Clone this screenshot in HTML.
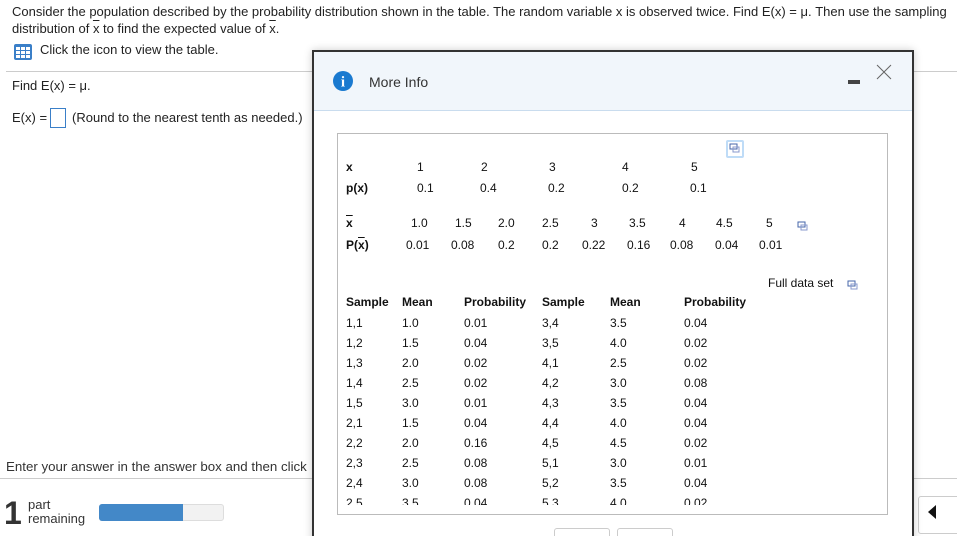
<!DOCTYPE html>
<html style="overflow:hidden"><head><style>
html,body{overflow:hidden}
body{margin:0;width:957px;height:536px;background:#fff;font-family:"Liberation Sans",sans-serif;color:#222;position:relative}
.a{position:absolute;white-space:nowrap}
.t{font-size:13px}
.o{text-decoration:overline}
.d{position:absolute;font-size:12px;color:#111}
pre{position:absolute;top:25px;margin:0;font-family:'Liberation Sans',sans-serif;font-size:12px;line-height:20px;color:#111}
</style></head><body>
<div class="a t" style="left:12px;top:4px">Consider the population described by the probability distribution shown in the table. The random variable x is observed twice. Find E(x) = μ. Then use the sampling</div>
<div class="a t" style="left:12px;top:21px">distribution of <span class="o">x</span> to find the expected value of <span class="o">x</span>.</div>
<svg class="a" style="left:14px;top:44px" width="18" height="16"><rect x="0" y="0" width="18" height="16" rx="2" fill="#3a7fc8"/><g fill="#fff"><rect x="2" y="3" width="4" height="3"/><rect x="7" y="3" width="4" height="3"/><rect x="12" y="3" width="4" height="3"/><rect x="2" y="7" width="4" height="3"/><rect x="7" y="7" width="4" height="3"/><rect x="12" y="7" width="4" height="3"/><rect x="2" y="11" width="4" height="3"/><rect x="7" y="11" width="4" height="3"/><rect x="12" y="11" width="4" height="3"/></g></svg>
<div class="a t" style="left:40px;top:42px">Click the icon to view the table.</div>
<div class="a" style="left:6px;top:71px;width:951px;height:1px;background:#ccc"></div>
<div class="a t" style="left:12px;top:78px">Find E(x) = μ.</div>
<div class="a t" style="left:12px;top:110px">E(x) =</div>
<div class="a" style="left:50px;top:108px;width:14px;height:18px;border:1px solid #3a7fc8"></div>
<div class="a t" style="left:72px;top:110px">(Round to the nearest tenth as needed.)</div>
<div class="a" style="left:6px;top:459px;color:#333;font-size:13.3px">Enter your answer in the answer box and then click</div>
<div class="a" style="left:0;top:478px;width:957px;height:1px;background:#ccc"></div>
<div class="a" style="left:4px;top:495px;font-size:32px;font-weight:bold;color:#333">1</div>
<div class="a" style="left:28px;top:498px;font-size:13px;line-height:14px;color:#333">part<br>remaining</div>
<div class="a" style="left:99px;top:504px;width:123px;height:15px;border:1px solid #ddd;border-radius:3px;background:#f2f2f2"></div>
<div class="a" style="left:99px;top:504px;width:84px;height:17px;background:#4388c8;border-radius:3px 0 0 3px"></div>
<div class="a" style="left:918px;top:496px;width:40px;height:36px;border:1px solid #ccc;border-radius:3px;background:#fff"></div>
<div class="a" style="left:928px;top:505px;width:0;height:0;border-top:7px solid transparent;border-bottom:7px solid transparent;border-right:8px solid #111"></div>

<div class="a" style="left:312px;top:50px;width:598px;height:500px;border:2px solid #333;background:#fff;overflow:hidden;box-shadow:0 0 8px rgba(0,0,0,.2)">
 <div class="a" style="left:0;top:0;width:598px;height:58px;background:#f1f6fb;border-bottom:1px solid #c9dcee"></div>
 <svg class="a" style="left:19px;top:19px" width="20" height="20"><circle cx="10" cy="10" r="10" fill="#1a7ad0"/><text x="10" y="15.5" text-anchor="middle" font-family="Liberation Serif" font-weight="bold" font-size="15" fill="#fff">i</text></svg>
 <div class="a" style="left:55px;top:22px;font-size:14px;color:#333">More Info</div>
 <div class="a" style="left:534px;top:28px;width:12px;height:4px;background:#444"></div>
 <svg class="a" style="left:562px;top:12px" width="16" height="16"><path d="M1 1L15 15M15 1L1 15" stroke="#666" stroke-width="1"/></svg>
 <div class="a" style="left:23px;top:81px;width:549px;height:380px;border:1px solid #bbb"></div>
 <div class="a" style="left:412px;top:88px;width:14px;height:14px;border:2px solid #bfdcf7;border-radius:2px"></div>
 <svg class="a" style="left:415px;top:91px" width="12" height="10"><rect x="1" y="1" width="7" height="5" fill="none" stroke="#4466aa"/><rect x="4" y="4" width="6" height="5" fill="none" stroke="#8899cc"/></svg>
 <svg class="a" style="left:483px;top:169px" width="12" height="10"><rect x="1" y="1" width="7" height="5" fill="none" stroke="#4466aa"/><rect x="4" y="4" width="6" height="5" fill="none" stroke="#8899cc"/></svg>
 <svg class="a" style="left:533px;top:228px" width="12" height="10"><rect x="1" y="1" width="7" height="5" fill="none" stroke="#4466aa"/><rect x="4" y="4" width="6" height="5" fill="none" stroke="#8899cc"/></svg>
 <div class="d" style="left:454px;top:224px">Full data set</div>
 <div class="a" style="left:240px;top:476px;width:54px;height:30px;border:1px solid #ccc;border-radius:3px"></div>
 <div class="a" style="left:303px;top:476px;width:54px;height:30px;border:1px solid #ccc;border-radius:3px"></div>
</div>

<div class="d" style="left:346px;top:160px;font-weight:bold">x</div>
<div class="d" style="left:346px;top:181px;font-weight:bold">p(x)</div>
<div class="d" style="left:417px;top:160px">1</div><div class="d" style="left:481px;top:160px">2</div><div class="d" style="left:549px;top:160px">3</div><div class="d" style="left:622px;top:160px">4</div><div class="d" style="left:691px;top:160px">5</div>
<div class="d" style="left:417px;top:181px">0.1</div><div class="d" style="left:480px;top:181px">0.4</div><div class="d" style="left:548px;top:181px">0.2</div><div class="d" style="left:622px;top:181px">0.2</div><div class="d" style="left:690px;top:181px">0.1</div>
<div class="d" style="left:346px;top:216px;font-weight:bold"><span class="o">x</span></div>
<div class="d" style="left:346px;top:238px;font-weight:bold">P(<span class="o">x</span>)</div>
<div class="d" style="left:411px;top:216px">1.0</div><div class="d" style="left:455px;top:216px">1.5</div><div class="d" style="left:498px;top:216px">2.0</div><div class="d" style="left:542px;top:216px">2.5</div><div class="d" style="left:591px;top:216px">3</div><div class="d" style="left:629px;top:216px">3.5</div><div class="d" style="left:679px;top:216px">4</div><div class="d" style="left:716px;top:216px">4.5</div><div class="d" style="left:766px;top:216px">5</div>
<div class="d" style="left:406px;top:238px">0.01</div><div class="d" style="left:451px;top:238px">0.08</div><div class="d" style="left:498px;top:238px">0.2</div><div class="d" style="left:542px;top:238px">0.2</div><div class="d" style="left:582px;top:238px">0.22</div><div class="d" style="left:627px;top:238px">0.16</div><div class="d" style="left:670px;top:238px">0.08</div><div class="d" style="left:715px;top:238px">0.04</div><div class="d" style="left:759px;top:238px">0.01</div>

<div style="position:absolute;left:339px;top:288px;width:548px;height:217px;overflow:hidden">
<div class="d" style="left:7px;top:7px;font-weight:bold">Sample</div><div class="d" style="left:63px;top:7px;font-weight:bold">Mean</div><div class="d" style="left:125px;top:7px;font-weight:bold">Probability</div><div class="d" style="left:203px;top:7px;font-weight:bold">Sample</div><div class="d" style="left:271px;top:7px;font-weight:bold">Mean</div><div class="d" style="left:345px;top:7px;font-weight:bold">Probability</div>
<pre style="left:7px">1,1
1,2
1,3
1,4
1,5
2,1
2,2
2,3
2,4
2,5</pre>
<pre style="left:63px">1.0
1.5
2.0
2.5
3.0
1.5
2.0
2.5
3.0
3.5</pre>
<pre style="left:125px">0.01
0.04
0.02
0.02
0.01
0.04
0.16
0.08
0.08
0.04</pre>
<pre style="left:203px">3,4
3,5
4,1
4,2
4,3
4,4
4,5
5,1
5,2
5,3</pre>
<pre style="left:271px">3.5
4.0
2.5
3.0
3.5
4.0
4.5
3.0
3.5
4.0</pre>
<pre style="left:345px">0.04
0.02
0.02
0.08
0.04
0.04
0.02
0.01
0.04
0.02</pre>
</div>
</body></html>
